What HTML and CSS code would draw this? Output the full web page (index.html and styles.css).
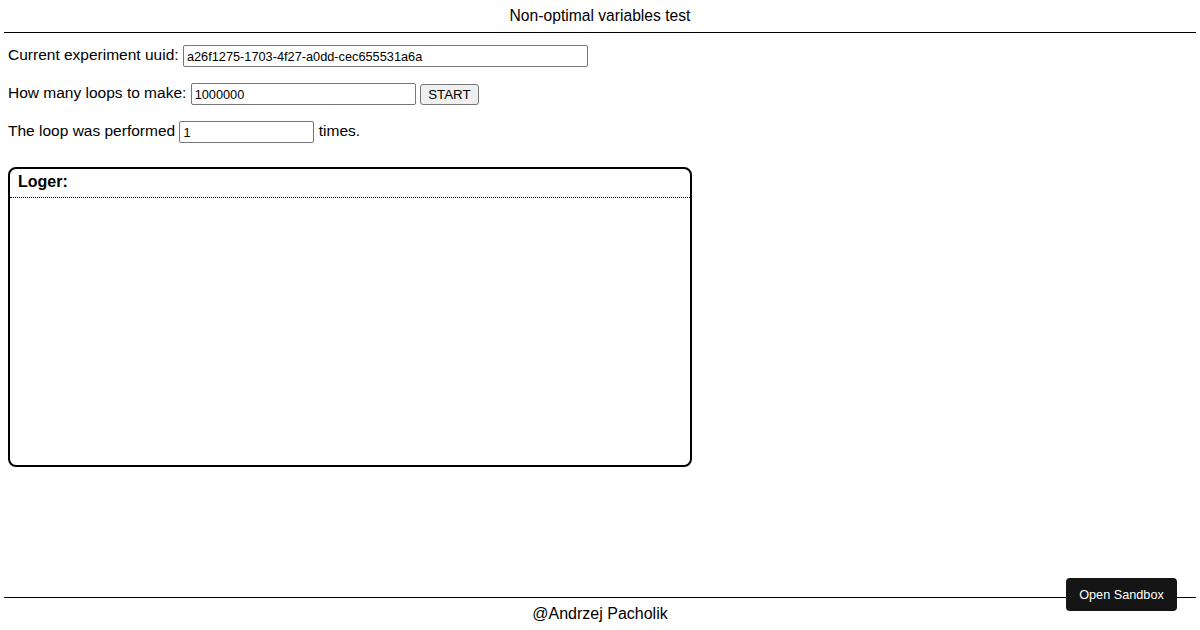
FILE: index.html
```html
<!DOCTYPE html>
<html lang="en">
<head>
<meta charset="utf-8">
<title>Non-optimal variables test</title>
<link rel="stylesheet" href="styles.css">
</head>
<body>
<div class="page">
  <header class="top">Non-optimal variables test</header>
  <main class="main">
    <div class="row">
      <span class="label">Current experiment uuid:</span>
      <input class="field field-uuid" type="text" value="a26f1275-1703-4f27-a0dd-cec655531a6a">
    </div>
    <div class="row">
      <span class="label">How many loops to make:</span>
      <input class="field field-loops" type="text" value="1000000">
      <button class="btn" type="button">START</button>
    </div>
    <div class="row">
      <span class="label">The loop was performed</span>
      <input class="field field-count" type="text" value="1">
      <span class="label">times.</span>
    </div>
    <section class="logger">
      <div class="logger-title">Loger:</div>
      <div class="logger-body"></div>
    </section>
  </main>
  <footer class="bottom">@Andrzej Pacholik</footer>
</div>
<a class="sandbox" href="#">Open Sandbox</a>
</body>
</html>
```
FILE: styles.css
```css
html, body {
  margin: 0;
  padding: 0;
  height: 100%;
}
body {
  font-family: "Liberation Sans", Arial, sans-serif;
  font-size: 16px;
  color: #000;
  background: #fff;
}
.page {
  display: flex;
  flex-direction: column;
  min-height: 100vh;
  padding: 0 4px;
  box-sizing: border-box;
}
.top {
  text-align: center;
  font-size: 15.65px;
  line-height: 18px;
  padding: 7px 0 7px;
  border-bottom: 1px solid #000;
}
.main {
  padding: 12px 4px 0;
  flex: 1;
}
.row {
  display: flex;
  align-items: center;
  gap: 4.3px;
  height: 22px;
  margin-bottom: 16px;
  font-size: 15.5px;
  line-height: 18px;
}
.label {
  margin-bottom: 2px;
}
.field {
  box-sizing: border-box;
  height: 22px;
  border: 1px solid #767676;
  border-radius: 2px;
  padding: 1px 3px;
  font-family: "Liberation Sans", Arial, sans-serif;
  font-size: 12.75px;
  color: #000;
  background: #fff;
}
.field-uuid { width: 405px; }
.field-loops { width: 225px; }
.field-count { width: 135px; }
.btn {
  box-sizing: border-box;
  height: 21px;
  width: 59px;
  border: 1px solid #767676;
  border-radius: 3px;
  background: #efefef;
  font-family: "Liberation Sans", Arial, sans-serif;
  font-size: 13.33px;
  color: #000;
  padding: 1px 6px;
}
.logger {
  margin-top: 24px;
  width: 684px;
  height: 300px;
  box-sizing: border-box;
  border: 2px solid #000;
  border-radius: 8px;
}
.logger-title {
  font-weight: bold;
  line-height: 20px;
  padding: 3px 8px 5px;
  border-bottom: 1px dotted #000;
}
.bottom {
  text-align: center;
  line-height: 18px;
  padding: 7px 0 7px;
  border-top: 1px solid #000;
}
.sandbox {
  position: fixed;
  right: 23px;
  bottom: 19px;
  width: 111px;
  height: 33px;
  box-sizing: border-box;
  display: flex;
  align-items: center;
  justify-content: center;
  background: #151515;
  color: #fff;
  border-radius: 4px;
  font-family: "Liberation Sans", Arial, sans-serif;
  font-size: 12.7px;
  text-decoration: none;
}
```
